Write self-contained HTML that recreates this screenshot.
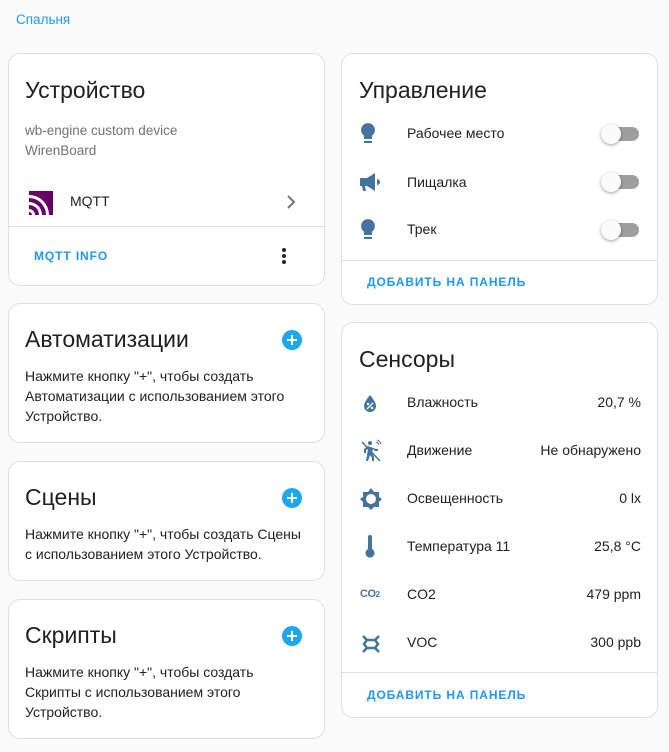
<!DOCTYPE html>
<html><head><meta charset="utf-8"><style>
*{box-sizing:border-box;margin:0;padding:0}
body{width:669px;height:752px;background:#fafafa;font-family:"Liberation Sans",sans-serif;color:#212121;position:relative;overflow:hidden}
.a{position:absolute}
.card{position:absolute;background:#fff;border:1px solid #e0e0e0;border-radius:12px}
.h{position:absolute;font-size:23px;color:#212121}
.t{position:absolute;font-size:14px;color:#212121;white-space:nowrap}
.p{position:absolute;font-size:14px;line-height:20px;color:#212121}
.btn{position:absolute;font-size:12px;font-weight:bold;letter-spacing:0.9px;color:#2196f3}
.sep{position:absolute;left:0;right:0;height:1px;background:#e0e0e0}
.tg{position:absolute;width:36px;height:14px;border-radius:7px;background:#9e9e9e}
.tg::after{content:"";position:absolute;left:-2px;top:-3px;width:20px;height:20px;border-radius:50%;background:#fafafa;box-shadow:0 1px 3px rgba(0,0,0,.4)}
.plus{position:absolute;width:20px;height:20px;border-radius:50%;background:#1ea7ee}
.plus::before{content:"";position:absolute;left:5px;top:9px;width:10px;height:2px;background:#fff}
.plus::after{content:"";position:absolute;left:9px;top:5px;width:2px;height:10px;background:#fff}
.r{text-align:right}
</style></head><body>
<div class="t" style="left:16px;top:12px;color:#2196f3;font-size:13.5px">Спальня</div>

<div class="card" style="left:8px;top:53px;width:317px;height:233px">
 <div class="h" style="left:16px;top:23px">Устройство</div>
 <div class="p" style="left:16px;top:67px;color:#727272;font-size:13.5px">wb-engine custom device<br>WirenBoard</div>
 <svg class="a" style="left:20px;top:137px" width="24" height="24" viewBox="0 0 24 24"><rect width="24" height="24" fill="#660066"/><path d="M0 4a20 20 0 0 1 20 20h-3A17 17 0 0 0 0 7z M0 11a13 13 0 0 1 13 13h-3A10 10 0 0 0 0 14z M0 18a6 6 0 0 1 6 6H3a3 3 0 0 0-3-3z" fill="#fff"/></svg>
 <div class="t" style="left:61px;top:139px">MQTT</div>
 <svg class="a" style="left:276px;top:140px" width="12" height="16" viewBox="0 0 12 16"><path d="M3 2l6 6-6 6" stroke="#757575" stroke-width="2" fill="none"/></svg>
 <div class="sep" style="top:172px"></div>
 <div class="btn" style="left:25px;top:195px">MQTT INFO</div>
 <div class="a" style="left:273px;top:194px;width:4px;height:4px;border-radius:2px;background:#222"></div>
 <div class="a" style="left:273px;top:200px;width:4px;height:4px;border-radius:2px;background:#222"></div>
 <div class="a" style="left:273px;top:206px;width:4px;height:4px;border-radius:2px;background:#222"></div>
</div>

<div class="card" style="left:8px;top:303px;width:317px;height:140px">
 <div class="h" style="left:16px;top:22px">Автоматизации</div>
 <div class="plus" style="left:273px;top:26px"></div>
 <div class="p" style="left:16px;top:62px">Нажмите кнопку "+", чтобы создать<br>Автоматизации с использованием этого<br>Устройство.</div>
</div>

<div class="card" style="left:8px;top:461px;width:317px;height:120px">
 <div class="h" style="left:16px;top:22px">Сцены</div>
 <div class="plus" style="left:273px;top:26px"></div>
 <div class="p" style="left:16px;top:62px">Нажмите кнопку "+", чтобы создать Сцены<br>с использованием этого Устройство.</div>
</div>

<div class="card" style="left:8px;top:599px;width:317px;height:140px">
 <div class="h" style="left:16px;top:22px">Скрипты</div>
 <div class="plus" style="left:273px;top:26px"></div>
 <div class="p" style="left:16px;top:62px">Нажмите кнопку "+", чтобы создать<br>Скрипты с использованием этого<br>Устройство.</div>
</div>

<div class="card" style="left:341px;top:53px;width:317px;height:252px">
 <div class="h" style="left:17px;top:23px">Управление</div>
 <svg class="a" style="left:17px;top:68px" width="18" height="24" viewBox="0 0 18 24"><path d="M9 1a7 7 0 0 0-4 12.7V17h8v-3.3A7 7 0 0 0 9 1z" fill="#44739e"/><rect x="5" y="19" width="8" height="2" fill="#44739e"/></svg>
 <div class="t" style="left:65px;top:71px">Рабочее место</div>
 <div class="tg" style="left:261px;top:73px"></div>
 <svg class="a" style="left:17px;top:118px" width="24" height="20" viewBox="0 0 24 20"><path d="M1 6h7l8-5v18l-8-5H6l1 5H4l-1-5H1z" fill="#44739e"/><path d="M18 7a3 3 0 0 1 0 6z" fill="#44739e"/></svg>
 <div class="t" style="left:65px;top:120px">Пищалка</div>
 <div class="tg" style="left:261px;top:121px"></div>
 <svg class="a" style="left:17px;top:164px" width="18" height="24" viewBox="0 0 18 24"><path d="M9 1a7 7 0 0 0-4 12.7V17h8v-3.3A7 7 0 0 0 9 1z" fill="#44739e"/><rect x="5" y="19" width="8" height="2" fill="#44739e"/></svg>
 <div class="t" style="left:65px;top:167px">Трек</div>
 <div class="tg" style="left:261px;top:169px"></div>
 <div class="sep" style="top:206px"></div>
 <div class="btn" style="left:25px;top:221px">ДОБАВИТЬ НА ПАНЕЛЬ</div>
</div>

<div class="card" style="left:341px;top:322px;width:317px;height:396px">
 <div class="h" style="left:17px;top:23px">Сенсоры</div>
 <svg class="a" style="left:20px;top:71px" width="16" height="20" viewBox="0 0 16 20"><path d="M8 1C8 1 2 8 2 12a6 6 0 0 0 12 0C14 8 8 1 8 1z" fill="#44739e"/><path d="M5 15l6-6" stroke="#fff" stroke-width="1.3"/><circle cx="6" cy="10" r="1.2" fill="#fff"/><circle cx="10" cy="14" r="1.2" fill="#fff"/></svg>
 <div class="t" style="left:65px;top:71px">Влажность</div>
 <div class="t r" style="right:16px;top:71px">20,7 %</div>
 <svg class="a" style="left:17px;top:116px" width="24" height="24" viewBox="0 0 24 24"><circle cx="11" cy="4" r="2" fill="#44739e"/><path d="M9 7l-4 3v4h2v-3l2-1-2 12h2l2-6 2 3v3h2v-4l-2-4 1-4 2 2h3v-2h-2z" fill="#44739e"/><path d="M3 3l18 19" stroke="#44739e" stroke-width="1.5"/><path d="M17 3a4 4 0 0 1 3 3M18 1a6 6 0 0 1 4 4" stroke="#44739e" fill="none"/></svg>
 <div class="t" style="left:65px;top:119px">Движение</div>
 <div class="t r" style="right:16px;top:119px">Не обнаружено</div>
 <svg class="a" style="left:17px;top:164px" width="24" height="24" viewBox="0 0 24 24"><path d="M12 1l3 4h5v5l3 2-3 3v5h-5l-3 3-3-3H4v-5l-3-3 3-2V5h5z" fill="#44739e"/><circle cx="12" cy="12" r="5" fill="#fff"/></svg>
 <div class="t" style="left:65px;top:167px">Освещенность</div>
 <div class="t r" style="right:16px;top:167px">0 lx</div>
 <svg class="a" style="left:20px;top:212px" width="16" height="24" viewBox="0 0 16 24"><path d="M6 2a2 2 0 0 1 4 0v12a4.5 4.5 0 1 1-4 0z" fill="#44739e"/></svg>
 <div class="t" style="left:65px;top:215px">Температура 11</div>
 <div class="t r" style="right:16px;top:215px">25,8 °C</div>
 <div class="t" style="left:18px;top:265px;color:#44739e;font-weight:bold;font-size:11px;letter-spacing:-.5px">CO<span style="font-size:8px">2</span></div>
 <div class="t" style="left:65px;top:263px">CO2</div>
 <div class="t r" style="right:16px;top:263px">479 ppm</div>
 <svg class="a" style="left:18px;top:310px" width="22" height="22" viewBox="0 0 22 22"><path d="M7 7h8l3 4-3 4H7l-3-4z" stroke="#44739e" stroke-width="2.5" fill="none"/><path d="M7 7L3 3M15 7l4-4M7 15l-4 4M15 15l4 4" stroke="#44739e" stroke-width="2.5"/></svg>
 <div class="t" style="left:65px;top:311px">VOC</div>
 <div class="t r" style="right:16px;top:311px">300 ppb</div>
 <div class="sep" style="top:349px"></div>
 <div class="btn" style="left:25px;top:365px">ДОБАВИТЬ НА ПАНЕЛЬ</div>
</div>
</body></html>
